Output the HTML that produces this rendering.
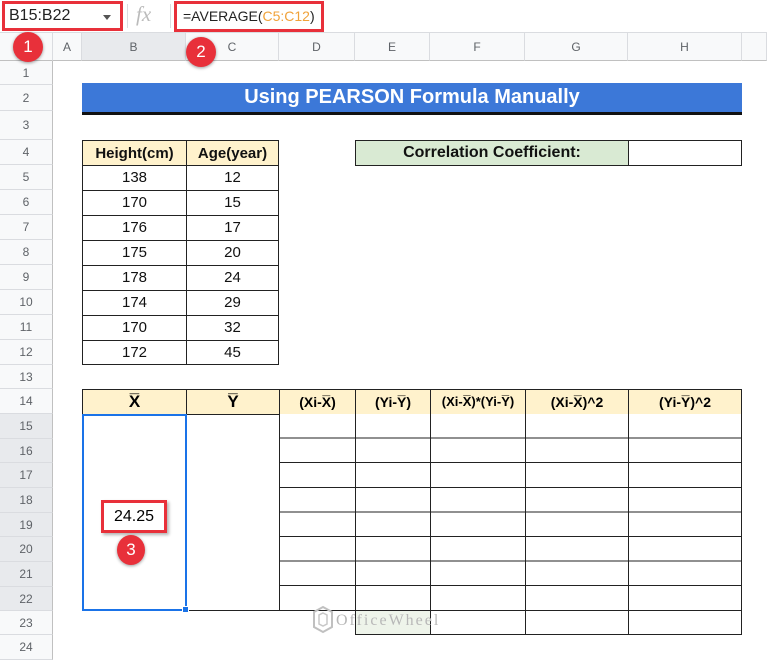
<!DOCTYPE html><html><head><style>
body{margin:0;width:767px;height:659px;overflow:hidden;background:#fff;font-family:"Liberation Sans",Arial,sans-serif;position:relative}
div{position:absolute;box-sizing:border-box}
.rh{left:0;width:53px;height:25px;background:#f8f9fa;border-bottom:1px solid #dadce0;border-right:1px solid #c0c0c0;color:#5f6368;font-size:12px;text-align:center;line-height:25px}
.rh.s{background:#e8eaed}
.ch{top:33px;height:28px;background:#f8f9fa;border-right:1px solid #dadce0;border-bottom:1px solid #c0c0c0;color:#5f6368;font-size:12px;text-align:center;line-height:28px}
.c{border:1px solid #222;font-size:15px;text-align:center;line-height:24px;color:#111}
.h{background:#fff2cc;font-weight:bold}
.hd{background:#fff2cc;font-weight:bold;font-size:14px;border:1px solid #222;text-align:center;line-height:24px;white-space:nowrap}
.badge{width:28px;height:28px;border-radius:50%;background:#e8303a;color:#fff;font-size:17px;text-align:center;line-height:28px;box-shadow:0 1px 3px rgba(0,0,0,.4)}
.rb{border:3px solid #e8303a}
</style></head><body>
<div style="left:0;top:0;width:767px;height:33px;border-bottom:1px solid #dadce0;background:#fff"></div>
<div style="left:9px;top:7px;font-size:16px;color:#222">B15:B22</div>
<div style="left:103px;top:15px;width:0;height:0;border-left:4px solid transparent;border-right:4px solid transparent;border-top:5px solid #555"></div>
<div class="rb" style="left:2px;top:1px;width:121px;height:30px"></div>
<div style="left:127px;top:4px;width:1px;height:24px;background:#dadce0"></div>
<div style="left:136px;top:2px;font-family:'Liberation Serif',serif;font-style:italic;font-size:21px;color:#bbb">fx</div>
<div style="left:170px;top:4px;width:1px;height:24px;background:#dadce0"></div>
<div style="left:183px;top:8px;font-size:14px;color:#222;white-space:nowrap">=AVERAGE(<span style="color:#f0a23a">C5:C12</span>)</div>
<div class="rb" style="left:174px;top:1px;width:150px;height:31px"></div>

<div class="ch" style="left:0;width:53px"></div>
<div class="ch" style="left:53px;width:29px">A</div>
<div class="ch" style="left:82px;width:104px;background:#e8eaed">B</div>
<div class="ch" style="left:186px;width:93px">C</div>
<div class="ch" style="left:279px;width:76px">D</div>
<div class="ch" style="left:355px;width:75px">E</div>
<div class="ch" style="left:430px;width:95px">F</div>
<div class="ch" style="left:525px;width:103px">G</div>
<div class="ch" style="left:628px;width:114px">H</div>
<div class="ch" style="left:742px;width:25px"></div>

<div class="rh" style="top:61px;height:24px;line-height:24px">1</div><div class="rh" style="top:85px;height:26px;line-height:26px">2</div><div class="rh" style="top:111px;height:29px;line-height:29px">3</div><div class="rh" style="top:140px">4</div><div class="rh" style="top:165px">5</div><div class="rh" style="top:190px">6</div><div class="rh" style="top:215px">7</div><div class="rh" style="top:240px">8</div><div class="rh" style="top:265px">9</div><div class="rh" style="top:290px">10</div><div class="rh" style="top:315px">11</div><div class="rh" style="top:340px">12</div><div class="rh" style="top:365px;height:24px">13</div><div class="rh" style="top:389px">14</div><div class="rh s" style="top:414px">15</div><div class="rh s" style="top:439px;height:24px">16</div><div class="rh s" style="top:463px">17</div><div class="rh s" style="top:488px">18</div><div class="rh s" style="top:513px;height:24px">19</div><div class="rh s" style="top:537px">20</div><div class="rh s" style="top:562px">21</div><div class="rh s" style="top:587px;height:24px">22</div><div class="rh" style="top:611px;height:24px;line-height:24px">23</div><div class="rh" style="top:635px">24</div>

<div class="badge" style="left:13px;top:32px;width:30px;height:30px;line-height:30px">1</div>
<div class="badge" style="left:186px;top:37px;width:30px;height:30px;line-height:30px">2</div>

<div style="left:82px;top:83px;width:660px;height:32px;background:#3c78d8;border-bottom:3px solid #111;color:#fff;font-weight:bold;font-size:20px;text-align:center;line-height:29px">Using PEARSON Formula Manually</div>

<div class="c h" style="left:82px;top:140px;width:105px;height:26px;line-height:25px">Height(cm)</div>
<div class="c h" style="left:186px;top:140px;width:93px;height:26px;line-height:25px">Age(year)</div>
<div class="c" style="left:82px;top:165px;width:105px;height:26px">138</div><div class="c" style="left:186px;top:165px;width:93px;height:26px">12</div>
<div class="c" style="left:82px;top:190px;width:105px;height:26px">170</div><div class="c" style="left:186px;top:190px;width:93px;height:26px">15</div>
<div class="c" style="left:82px;top:215px;width:105px;height:26px">176</div><div class="c" style="left:186px;top:215px;width:93px;height:26px">17</div>
<div class="c" style="left:82px;top:240px;width:105px;height:26px">175</div><div class="c" style="left:186px;top:240px;width:93px;height:26px">20</div>
<div class="c" style="left:82px;top:265px;width:105px;height:26px">178</div><div class="c" style="left:186px;top:265px;width:93px;height:26px">24</div>
<div class="c" style="left:82px;top:290px;width:105px;height:26px">174</div><div class="c" style="left:186px;top:290px;width:93px;height:26px">29</div>
<div class="c" style="left:82px;top:315px;width:105px;height:26px">170</div><div class="c" style="left:186px;top:315px;width:93px;height:26px">32</div>
<div class="c" style="left:82px;top:340px;width:105px;height:25px">172</div><div class="c" style="left:186px;top:340px;width:93px;height:25px">45</div>

<div class="c" style="left:355px;top:140px;width:274px;height:26px;background:#d9ead3;font-weight:bold;font-size:16px">Correlation Coefficient:</div>
<div class="c" style="left:628px;top:140px;width:114px;height:26px"></div>

<div class="hd" style="left:82px;top:389px;width:105px;height:26px;font-size:17px">X̅</div>
<div class="hd" style="left:186px;top:389px;width:94px;height:26px;font-size:17px">Y̅</div>
<div class="hd" style="left:279px;top:389px;width:77px;height:26px">(Xi-X̅)</div>
<div class="hd" style="left:355px;top:389px;width:76px;height:26px">(Yi-Y̅)</div>
<div class="hd" style="left:430px;top:389px;width:96px;height:26px;font-size:13px">(Xi-X̅)*(Yi-Y̅)</div>
<div class="hd" style="left:525px;top:389px;width:104px;height:26px">(Xi-X̅)^2</div>
<div class="hd" style="left:628px;top:389px;width:114px;height:26px">(Yi-Y̅)^2</div>

<div style="left:186px;top:414px;width:94px;height:197px;border-right:1px solid #222;border-bottom:1px solid #222"></div>
<div style="left:279px;top:414px;width:463px;height:197px;background:repeating-linear-gradient(#fff 0 23.6px,#222 23.6px 24.6px);border-left:1px solid #222;border-right:1px solid #222"></div>
<div style="left:355px;top:414px;width:1px;height:221px;background:#222"></div>
<div style="left:430px;top:414px;width:1px;height:221px;background:#222"></div>
<div style="left:525px;top:414px;width:1px;height:221px;background:#222"></div>
<div style="left:628px;top:414px;width:1px;height:221px;background:#222"></div>
<div style="left:355px;top:610px;width:387px;height:25px;border:1px solid #222;border-left:none"></div>
<div style="left:356px;top:611px;width:74px;height:23px;background:#eef4ea"></div>

<div style="left:82px;top:414px;width:105px;height:197px;border:2px solid #1a73e8"></div>
<div style="left:182px;top:606px;width:7px;height:7px;background:#1a73e8;border:1px solid #fff"></div>

<div style="left:101px;top:500px;width:66px;height:33px;border:3px solid #e8303a;font-size:16px;text-align:center;line-height:27px;box-shadow:2px 2px 3px rgba(0,0,0,.3);background:#fff">24.25</div>
<div class="badge" style="left:117px;top:535px;width:28px;height:30px;line-height:30px">3</div>

<div style="left:316px;top:603px;font-family:'Liberation Serif',serif;font-size:16px;color:#b8b8b8;letter-spacing:2px;line-height:36px;padding-left:20px">OfficeWheel</div>
<svg style="position:absolute;left:312px;top:605px" width="22" height="30" viewBox="0 0 22 30"><path d="M11 2 L20 7 L20 22 L11 27 L2 22 L2 7 Z" fill="none" stroke="#c0c0c0" stroke-width="2"/><path d="M11 8 L15 10 L15 19 L11 21 L7 19 L7 10Z" fill="none" stroke="#c8c8c8" stroke-width="1.5"/></svg>
</body></html>
